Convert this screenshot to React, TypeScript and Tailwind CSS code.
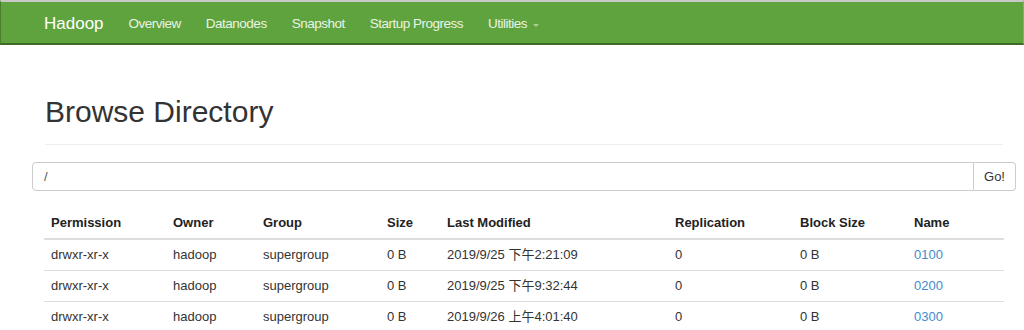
import React from 'react';

interface Entry {
  permission: string;
  owner: string;
  group: string;
  size: string;
  modified: string;
  replication: string;
  blockSize: string;
  name: string;
}

const entries: Entry[] = [
  { permission: 'drwxr-xr-x', owner: 'hadoop', group: 'supergroup', size: '0 B', modified: '2019/9/25 下午2:21:09', replication: '0', blockSize: '0 B', name: '0100' },
  { permission: 'drwxr-xr-x', owner: 'hadoop', group: 'supergroup', size: '0 B', modified: '2019/9/25 下午9:32:44', replication: '0', blockSize: '0 B', name: '0200' },
  { permission: 'drwxr-xr-x', owner: 'hadoop', group: 'supergroup', size: '0 B', modified: '2019/9/26 上午4:01:40', replication: '0', blockSize: '0 B', name: '0300' },
];

const navLinks = ['Overview', 'Datanodes', 'Snapshot', 'Startup Progress'];

// column widths taken from the screenshot, total 960px
const cols = ['w-[122px]', 'w-[90px]', 'w-[124px]', 'w-[60px]', 'w-[228px]', 'w-[125px]', 'w-[114px]', 'w-[97px]'];
const headers = ['Permission', 'Owner', 'Group', 'Size', 'Last Modified', 'Replication', 'Block Size', 'Name'];

export default function App() {
  return (
    <div className="min-h-[330px] bg-white font-['Liberation_Sans','Noto_Sans_CJK_SC',sans-serif] text-[#333]">
      {/* navbar */}
      <nav className="flex h-[45px] items-center border-t-2 border-b-2 border-l border-r border-t-[#c9c9c9] border-b-[#3d6b27] border-l-[#4a7f30] border-r-[#9a9a9a] bg-[#5fa33e] pt-[3px]">
        <span className="ml-[43px] mr-[25px] text-[17px] text-white">Hadoop</span>
        {navLinks.map((link) => (
          <span key={link} className="mr-[25px] text-[13.5px] tracking-[-0.5px] text-[#eaf3e4]">
            {link}
          </span>
        ))}
        <span className="flex items-center text-[13.5px] tracking-[-0.5px] text-[#eaf3e4]">
          Utilities
          <span className="ml-[6px] mt-[2px] h-0 w-0 border-x-[3px] border-t-[3px] border-x-transparent border-t-[#a9cf96]"></span>
        </span>
      </nav>

      {/* page header */}
      <div className="mx-[45px] mt-[50px] border-b border-[#eee] pb-[16px] w-[958px]">
        <h1 className="text-[30px] leading-[33px] text-[#333]">Browse Directory</h1>
      </div>

      {/* path input */}
      <div className="ml-[32px] mt-[17px] flex h-[29px] w-[984px]">
        <div className="flex flex-1 items-center rounded-l-[4px] border border-[#ccc] px-[11px] text-[13px] text-[#555]">
          /
        </div>
        <button className="rounded-r-[4px] border border-l-0 border-[#ccc] bg-white px-[10px] text-[13px] text-[#333]">
          Go!
        </button>
      </div>

      {/* listing */}
      <table className="ml-[44px] mt-[15px] w-[960px] table-fixed border-collapse text-[13px]">
        <thead>
          <tr className="border-b-2 border-[#ddd]">
            {headers.map((h, i) => (
              <th key={h} className={`${cols[i]} px-[7px] pt-[8px] pb-[6px] text-left font-bold leading-[18px] text-[#222]`}>
                {h}
              </th>
            ))}
          </tr>
        </thead>
        <tbody>
          {entries.map((e) => (
            <tr key={e.name} className="border-b border-[#ddd] last:border-b-0">
              <td className="px-[7px] py-[6px] leading-[18px]">{e.permission}</td>
              <td className="px-[7px] py-[6px] leading-[18px]">{e.owner}</td>
              <td className="px-[7px] py-[6px] leading-[18px]">{e.group}</td>
              <td className="px-[7px] py-[6px] leading-[18px]">{e.size}</td>
              <td className="px-[7px] py-[6px] leading-[18px]">{e.modified}</td>
              <td className="px-[7px] py-[6px] leading-[18px]">{e.replication}</td>
              <td className="px-[7px] py-[6px] leading-[18px]">{e.blockSize}</td>
              <td className="px-[7px] py-[6px] leading-[18px] text-[#428bca]">{e.name}</td>
            </tr>
          ))}
        </tbody>
      </table>
    </div>
  );
}
